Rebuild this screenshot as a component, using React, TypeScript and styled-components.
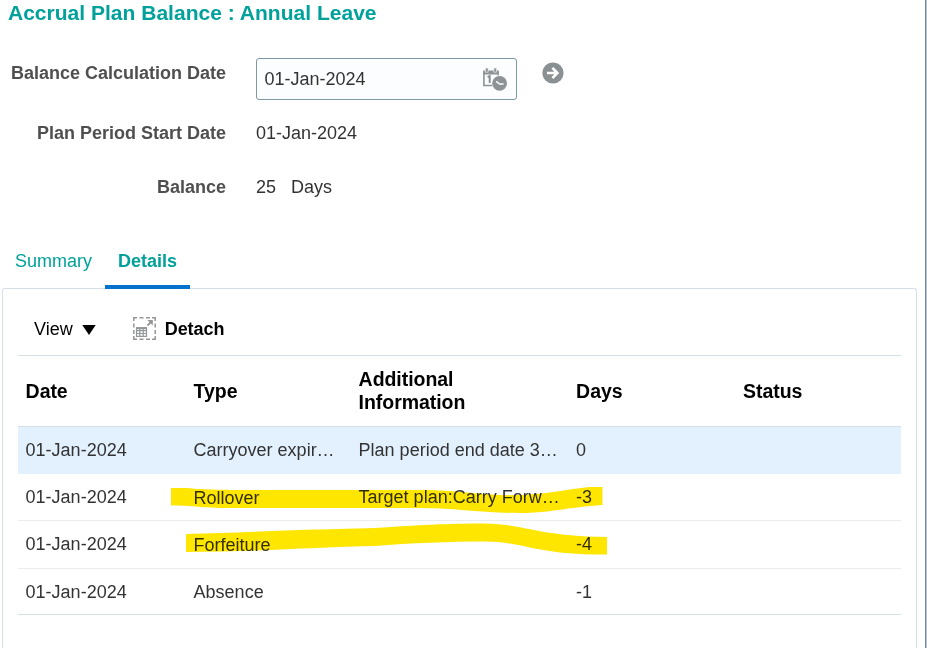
import React from "react";
import styled, { createGlobalStyle } from "styled-components";

const GlobalStyle = createGlobalStyle`
  * { box-sizing: border-box; }
  body { margin: 0; background: #fff; }
`;

const Page = styled.main`
  position: relative;
  display: flex;
  flex-direction: column;
  width: 927px;
  height: 648px;
  overflow: hidden;
  padding-left: 2px;
  border-right: 1px solid #b9bfc5;
  box-shadow: inset -1px 0 0 #6e8ba8;
  font-family: "Liberation Sans", Arial, sans-serif;
  font-size: 18px;
  line-height: 22px;
  color: #333;
`;

const Title = styled.h1`
  flex: none;
  margin: 0 0 0 6px;
  height: 54px;
  padding-top: 1px;
  font-size: 21px;
  line-height: 24px;
  letter-spacing: 0.015px;
  color: #00a19b;
`;

const Form = styled.dl`
  display: grid;
  flex: none;
  grid-template-columns: 224px 1fr;
  grid-template-rows: 68px 54px 54px;
  column-gap: 30px;
  margin: 0;
`;

const Label = styled.dt<{ $top?: number }>`
  padding-top: ${(p) => p.$top ?? 0}px;
  text-align: right;
  font-weight: bold;
  color: #4f4f4f;
`;

const Value = styled.dd<{ $top?: number }>`
  display: flex;
  align-items: flex-start;
  gap: 15px;
  margin: 0;
  padding-top: ${(p) => p.$top ?? 0}px;
`;

const DateField = styled.div`
  display: flex;
  justify-content: space-between;
  width: 261px;
  height: 42px;
  padding: 9px 8px 0 7.5px;
  border: 1px solid #7d98a6;
  border-radius: 3px;
  background: #fcfdfe;
`;

const GoButton = styled.button`
  display: flex;
  margin: 4px 0 0 10px;
  padding: 0;
  border: 0;
  background: none;
`;

const Tabs = styled.nav`
  display: flex;
  flex: none;
  height: 58px;
`;

const Tab = styled.button<{ $active?: boolean }>`
  width: ${(p) => (p.$active ? 85 : 103)}px;
  height: 59px;
  padding: 7px 0 0;
  z-index: 1;
  border: 0;
  border-bottom: 4px solid ${(p) => (p.$active ? "#0572ce" : "transparent")};
  background: none;
  font: inherit;
  font-weight: ${(p) => (p.$active ? "bold" : "normal")};
  color: #00a19b;
`;

const Panel = styled.section`
  flex: 1;
  width: 915px;
  padding: 0 15px;
  border: 1px solid #d6dfe6;
  border-bottom: 0;
  border-radius: 3px 3px 0 0;
`;

const Toolbar = styled.div`
  display: flex;
  align-items: flex-start;
  height: 67px;
  padding: 13px 0 0 16px;
  border-bottom: 1px solid #d6dfe6;
`;

const ToolButton = styled.button<{ $bold?: boolean }>`
  display: flex;
  align-items: center;
  gap: 9px;
  height: 54px;
  margin-right: 37px;
  padding: 0;
  border: 0;
  background: none;
  font: inherit;
  font-weight: ${(p) => (p.$bold ? "bold" : "normal")};
  letter-spacing: ${(p) => (p.$bold ? "-0.05px" : "normal")};
  color: #000;

  svg {
    margin-top: ${(p) => (p.$bold ? -2 : 2)}px;
  }
`;

const Row = styled.div<{ $h: number; $selected?: boolean; $strong?: boolean; $head?: boolean }>`
  display: grid;
  grid-template-columns: 168px 165px 217.5px 167px 165.5px;
  align-items: start;
  height: ${(p) => p.$h}px;
  border-bottom: ${(p) => (p.$selected ? "0" : `1px solid ${p.$strong ? "#d6dfe6" : "#ebeced"}`)};
  background: ${(p) => (p.$selected ? "#e3f1ff" : "transparent")};
  ${(p) => p.$head && "font-size: 19.5px; line-height: 23px; font-weight: bold; color: #000; letter-spacing: -0.05px;"}
`;

const Cell = styled.div<{ $top?: number }>`
  padding: ${(p) => p.$top ?? 12}px 8px 0 7.6px;
  overflow: hidden;
  text-overflow: ellipsis;
  white-space: nowrap;
`;

const Marker = styled.svg`
  position: absolute;
  left: 160px;
  top: 480px;
  pointer-events: none;
  mix-blend-mode: multiply;
`;

const CalendarIcon = () => (
  <svg width="26" height="25" viewBox="0 0 26 25" fill="none">
    <path d="M1.9 4v13.5H11" stroke="#8c9295" strokeWidth="1.6" />
    <path d="M1.1 2.4h15.8v4H1.1zM15.5 6h1.4v3h-1.4z" fill="#8c9295" />
    <path d="M3.4 0h2.8v4.2H3.4zM11.8 0h2.8v4.2h-2.8z" fill="#8c9295" stroke="#fcfdfe" strokeWidth=".6" />
    <path d="M5.6 9.2l2.1-1V15" stroke="#8c9295" strokeWidth="2" />
    <circle cx="17.6" cy="15.3" r="8" fill="#fcfdfe" />
    <circle cx="17.6" cy="15.3" r="7.4" fill="#8c9295" />
    <path d="M14.2 13.3l3.4 2.7h4" stroke="#fff" strokeWidth="1.5" />
  </svg>
);

const GoIcon = () => (
  <svg width="22" height="22" viewBox="0 0 22 22" fill="none">
    <circle cx="11" cy="11" r="10.6" fill="#8b9093" />
    <path d="M5 11h10M10.4 5.8l5 5.2-5 5.2" stroke="#fff" strokeWidth="2.6" />
  </svg>
);

const DetachIcon = () => (
  <svg width="23" height="23" viewBox="0 0 23 23" fill="none" stroke="#939799">
    <path
      d="M.8 4V.8H4M6.5 .8h4M13 .8h4M19 .8h3.2V4M22.2 6.5v4M22.2 13v4M22.2 19v3.2H19M17 22.2h-4M10.5 22.2h-4M4 22.2H.8V19M.8 17v-4M.8 10.5v-4"
      strokeWidth="1.5"
    />
    <path d="M3.5 10.8h10v8.5h-10zM3.5 13.7h10M3.5 16.5h10M6.8 11v8.5M10.2 11v8.5" strokeWidth="1.2" />
    <path d="M3 11.2h11" strokeWidth="2" />
    <path d="M14.5 8.5l4-4" strokeWidth="1.8" />
    <path d="M14.4 3h5.4v5.4z" fill="#939799" stroke="none" />
  </svg>
);

const records = [
  { type: "Carryover expir…", info: "Plan period end date 3…", days: "0", height: 47, typeTop: 12, selected: true },
  { type: "Rollover", info: "Target plan:Carry Forw…", days: "-3", height: 47, typeTop: 13 },
  { type: "Forfeiture", info: "", days: "-4", height: 48, typeTop: 13 },
  { type: "Absence", info: "", days: "-1", height: 46, typeTop: 12, last: true },
];

export default function App() {
  return (
    <Page>
      <GlobalStyle />
      <Title>Accrual Plan Balance : Annual Leave</Title>
      <Form>
        <Label $top={8}>Balance Calculation Date</Label>
        <Value $top={4}>
          <DateField>
            <span>01-Jan-2024</span>
            <CalendarIcon />
          </DateField>
          <GoButton aria-label="Go">
            <GoIcon />
          </GoButton>
        </Value>
        <Label>Plan Period Start Date</Label>
        <Value>01-Jan-2024</Value>
        <Label>Balance</Label>
        <Value>
          <span>25</span>
          <span>Days</span>
        </Value>
      </Form>
      <Tabs>
        <Tab>Summary</Tab>
        <Tab $active>Details</Tab>
      </Tabs>
      <Panel>
        <Toolbar>
          <ToolButton>
            View
            <svg width="14" height="10" viewBox="0 0 14 10">
              <path d="M.3 0h13.4L7 10z" />
            </svg>
          </ToolButton>
          <ToolButton $bold>
            <DetachIcon />
            Detach
          </ToolButton>
        </Toolbar>
        <Row $h={71} $head $strong>
          <Cell $top={24}>Date</Cell>
          <Cell $top={24}>Type</Cell>
          <Cell>
            Additional
            <br />
            Information
          </Cell>
          <Cell $top={24}>Days</Cell>
          <Cell $top={24}>Status</Cell>
        </Row>
        {records.map((r) => (
          <Row key={r.type} $h={r.height} $selected={r.selected} $strong={r.last}>
            <Cell>01-Jan-2024</Cell>
            <Cell $top={r.typeTop}>{r.type}</Cell>
            <Cell>{r.info}</Cell>
            <Cell>{r.days}</Cell>
            <Cell />
          </Row>
        ))}
      </Panel>
      <Marker width="460" height="90" viewBox="160 480 460 90" fill="#ffe600">
        <path d="M171 488H186C210 490 225 490 260 490H430C460 491 475 494 500 495C540 496 555 491 589 487H602.5V505C570 507 550 513 520 513C480 513 455 508 420 508H220C195 507 190 505.5 171 505.5Z" />
        <path d="M186 534C240 533 280 530 375 528C420 525 445 523.5 485 523.5C525 524 535 536 607 537V554.5C535 555 525 541.5 485 541.5C450 541.5 410 543 375 546C320 547 260 551.5 186 552Z" />
      </Marker>
    </Page>
  );
}
